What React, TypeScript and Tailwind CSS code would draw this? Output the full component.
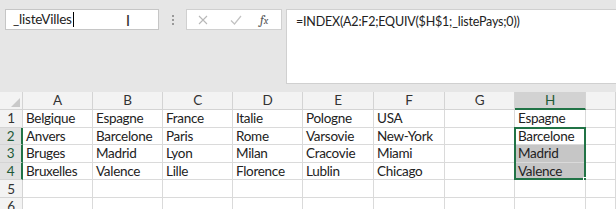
// Excel-like formula bar + small sheet showing a named range lookup.

const cols = ['A', 'B', 'C', 'D', 'E', 'F', 'G', 'H', ''];

const rows: string[][] = [
  ['Belgique', 'Espagne', 'France', 'Italie', 'Pologne', 'USA', '', 'Espagne', ''],
  ['Anvers', 'Barcelone', 'Paris', 'Rome', 'Varsovie', 'New-York', '', 'Barcelone', ''],
  ['Bruges', 'Madrid', 'Lyon', 'Milan', 'Cracovie', 'Miami', '', 'Madrid', ''],
  ['Bruxelles', 'Valence', 'Lille', 'Florence', 'Lublin', 'Chicago', '', 'Valence', ''],
  ['', '', '', '', '', '', '', '', ''],
  ['', '', '', '', '', '', '', '', ''],
];

const font = { fontFamily: 'Lato, "Open Sans", sans-serif' };

function FormulaBar() {
  return (
    <div className="flex h-[92px] bg-[#e6e6e6] pt-[9px]">
      <div className="ml-[5px] flex h-[21px] w-[154px] items-center border border-[#c6c6c6] bg-white pl-[7px] text-[13.5px] tracking-[-0.2px] text-[#222]">
        <span>_listeVilles</span>
        <span className="ml-px h-[15px] w-px bg-black" />
        <span className="ml-[52px] text-[16px] leading-none text-[#333]">I</span>
      </div>
      <div className="flex h-[21px] w-[27px] flex-col items-center justify-center gap-[2px]">
        <span className="h-[2px] w-[2px] bg-[#999]" />
        <span className="h-[2px] w-[2px] bg-[#999]" />
        <span className="h-[2px] w-[2px] bg-[#999]" />
      </div>
      <div className="flex h-[21px] w-[96px] items-center border border-[#d0d0d0] bg-white">
        <svg width="10" height="10" viewBox="0 0 10 10" className="ml-[11px]">
          <path d="M1 1L9 9M9 1L1 9" stroke="#b8b8b8" strokeWidth="1.1" />
        </svg>
        <svg width="12" height="10" viewBox="0 0 12 10" className="ml-[22px]">
          <path d="M1 5.5L4.5 9L11 1" stroke="#c2c2c2" strokeWidth="1.2" fill="none" />
        </svg>
        <span className="ml-[18px] font-serif text-[13px] italic text-[#555]">
          f<span className="text-[10px]">x</span>
        </span>
      </div>
      <div className="ml-[4px] h-[75px] flex-1 border border-r-0 border-[#d0d0d0] bg-white pl-[9px] pt-[3px] text-[12.5px] tracking-[-0.2px] text-[#222]">
        =INDEX(A2:F2;EQUIV($H$1;_listePays;0))
      </div>
    </div>
  );
}

function Sheet() {
  return (
    <div className="grid grid-cols-[23px_70px_70px_70px_70px_71px_71px_70px_71px_1fr] text-[13.5px] tracking-[-0.3px] text-[#222]">
      {/* header row */}
      <div className="relative h-[18px] border-b border-r border-[#d4d4d4] bg-[#f3f3f3]">
        <span className="absolute bottom-[2px] right-[2px] h-0 w-0 border-b-[9px] border-l-[9px] border-b-[#c9c9c9] border-l-transparent" />
      </div>
      {cols.map((c, i) => (
        <div
          key={`h-${i}`}
          className={`flex h-[18px] items-center justify-center border-r ${
            c === 'H'
              ? 'border-b-2 border-b-[#217346] border-r-[#d4d4d4] bg-[#d2d2d2] text-[#1e5a37]'
              : 'border-b border-[#d4d4d4] bg-[#f3f3f3] text-[#333]'
          }`}
        >
          {c}
        </div>
      ))}
      {rows.map((r, ri) => {
        const sel = ri >= 1 && ri <= 3;
        return [
          <div
            key={`n-${ri}`}
            className={`flex h-[17.6px] items-center justify-center border-b border-[#d4d4d4] ${
              sel
                ? 'border-r-2 border-r-[#217346] bg-[#e1e1e1] text-[#1e5a37]'
                : 'border-r bg-[#f3f3f3] text-[#333]'
            }`}
          >
            {ri + 1}
          </div>,
          ...r.map((v, ci) => {
            const isH = ci === 7;
            const inSel = isH && sel;
            const shaded = isH && (ri === 2 || ri === 3);
            return (
              <div
                key={`c-${ri}-${ci}`}
                className={`relative flex h-[17.6px] items-center overflow-visible whitespace-nowrap border-b border-r border-[#dadada] pl-[3px] ${
                  shaded ? 'bg-[#c6c6c6]' : 'bg-white'
                }`}
              >
                {v}
                {inSel && (
                  <span
                    className={`pointer-events-none absolute -left-px -right-px border-x-2 border-[#217346] ${
                      ri === 1 ? '-top-px border-t-2' : 'top-0'
                    } ${ri === 3 ? '-bottom-px border-b-2' : '-bottom-px'}`}
                  />
                )}
                {inSel && ri === 3 && (
                  <span className="absolute -bottom-[4px] -right-[4px] h-[6px] w-[6px] border border-white bg-[#217346]" />
                )}
              </div>
            );
          }),
        ];
      })}
    </div>
  );
}

export default function App() {
  return (
    <div className="h-[209px] w-[616px] overflow-hidden bg-white" style={font}>
      <FormulaBar />
      <Sheet />
    </div>
  );
}
